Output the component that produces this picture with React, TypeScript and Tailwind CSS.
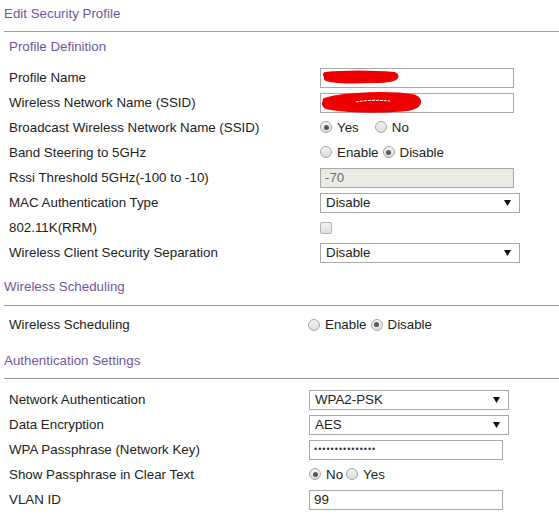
import React from "react";

const FONT = { fontFamily: '"Liberation Sans", Arial, sans-serif' };

const Radio: React.FC<{ checked?: boolean }> = ({ checked }) => (
  <span className="inline-flex w-[12px] h-[12px] rounded-full border border-[#a6a6a6] bg-gradient-to-b from-[#f4f4f4] to-[#dcdcdc] items-center justify-center shrink-0">
    {checked && <span className="w-[5px] h-[5px] rounded-full bg-[#5a5a5a]" />}
  </span>
);

const RadioGroup: React.FC<{ options: { label: string; checked?: boolean }[]; gap: string }> = ({ options, gap }) => (
  <div className={`flex items-center ${gap}`}>
    {options.map((o) => (
      <label key={o.label} className="flex items-center gap-[5px] text-[13.33px] text-[#222]">
        <Radio checked={o.checked} />
        <span>{o.label}</span>
      </label>
    ))}
  </div>
);

const TextBox: React.FC<{ value?: string; disabled?: boolean; children?: React.ReactNode }> = ({ value, disabled, children }) => (
  <div
    className={`relative w-[194px] h-[20px] border border-[#a9a9a9] flex items-center pl-[4px] text-[13.33px] ${
      disabled ? "bg-[#ebebe4] text-[#6d6d6d]" : "bg-white text-[#222]"
    }`}
  >
    {value}
    {children}
  </div>
);

const SelectBox: React.FC<{ value: string }> = ({ value }) => (
  <div className="w-[200px] h-[20px] border border-[#a9a9a9] bg-white flex items-center justify-between pl-[5px] pr-[8px] text-[13.33px] text-[#222]">
    <span>{value}</span>
    <svg width="7" height="6" viewBox="0 0 7 6">
      <path d="M0 0 H7 L3.5 6 Z" fill="#111" />
    </svg>
  </div>
);

const SectionTitle: React.FC<{ title: string; className: string }> = ({ title, className }) => (
  <div className={`flex items-center text-[13.33px] text-[#72579a] ${className}`}>{title}</div>
);

const Rule: React.FC = () => <div className="ml-[4px] border-t border-[#9c9c9c]" />;

const Row: React.FC<{ label: string; labelWidth: string; children?: React.ReactNode }> = ({ label, labelWidth, children }) => (
  <div className="flex items-center h-[25px]">
    <div className={`${labelWidth} pl-[9px] text-[13.33px] text-[#222] shrink-0`}>{label}</div>
    {children}
  </div>
);

export default function App() {
  return (
    <div className="w-[559px] h-[525px] bg-white overflow-hidden" style={FONT}>
      <SectionTitle title="Edit Security Profile" className="h-[27px] pl-[4px]" />
      <div className="h-[4px]" />
      <Rule />

      {/* Profile Definition */}
      <SectionTitle title="Profile Definition" className="h-[30px] pl-[9px]" />
      <div className="pt-[3px]">
        <Row label="Profile Name" labelWidth="w-[320px]">
          <TextBox>
            <svg className="absolute left-[1px] top-[0px]" width="80" height="16" viewBox="0 0 80 16">
              <path d="M4 6 C 20 4, 50 4, 72 6 C 77 8, 70 11, 50 11 C 30 12, 12 11, 5 9" stroke="#ee0000" strokeWidth="6" fill="#ee0000" strokeLinecap="round" />
            </svg>
          </TextBox>
        </Row>
        <Row label="Wireless Network Name (SSID)" labelWidth="w-[320px]">
          <TextBox>
            <svg className="absolute left-[1px] top-[-3px]" width="100" height="22" viewBox="0 0 100 22">
              <path d="M4 10 C 25 4, 70 3, 92 7 C 99 10, 96 16, 80 17 C 55 19, 25 18, 6 15 C 2 13, 3 11, 8 10" stroke="#ee0000" strokeWidth="7" fill="#ee0000" strokeLinecap="round" />
              <path d="M34 11 C 44 9, 56 9, 68 10" stroke="#ffffff" strokeWidth="1" strokeDasharray="3 1" fill="none" />
            </svg>
          </TextBox>
        </Row>
        <Row label="Broadcast Wireless Network Name (SSID)" labelWidth="w-[320px]">
          <RadioGroup gap="gap-[16px]" options={[{ label: "Yes", checked: true }, { label: "No" }]} />
        </Row>
        <Row label="Band Steering to 5GHz" labelWidth="w-[320px]">
          <RadioGroup gap="gap-[4px]" options={[{ label: "Enable" }, { label: "Disable", checked: true }]} />
        </Row>
        <Row label="Rssi Threshold 5GHz(-100 to -10)" labelWidth="w-[320px]">
          <TextBox value="-70" disabled />
        </Row>
        <Row label="MAC Authentication Type" labelWidth="w-[320px]">
          <SelectBox value="Disable" />
        </Row>
        <Row label="802.11K(RRM)" labelWidth="w-[320px]">
          <span className="w-[12px] h-[12px] rounded-[2px] border border-[#b5b5b5] bg-gradient-to-b from-[#f2f2f2] to-[#dedede]" />
        </Row>
        <Row label="Wireless Client Security Separation" labelWidth="w-[320px]">
          <SelectBox value="Disable" />
        </Row>
      </div>

      {/* Wireless Scheduling */}
      <SectionTitle title="Wireless Scheduling" className="h-[40px] pt-[4px] pl-[4px]" />
      <Rule />
      <div className="h-[38px] flex items-center">
        <div className="w-[308px] pl-[9px] text-[13.33px] text-[#222] shrink-0">Wireless Scheduling</div>
        <RadioGroup gap="gap-[4px]" options={[{ label: "Enable" }, { label: "Disable", checked: true }]} />
      </div>

      {/* Authentication Settings */}
      <SectionTitle title="Authentication Settings" className="h-[34px] pl-[4px]" />
      <Rule />
      <div className="pt-[8px]">
        <Row label="Network Authentication" labelWidth="w-[309px]">
          <SelectBox value="WPA2-PSK" />
        </Row>
        <Row label="Data Encryption" labelWidth="w-[309px]">
          <SelectBox value="AES" />
        </Row>
        <Row label="WPA Passphrase (Network Key)" labelWidth="w-[309px]">
          <TextBox>
            <span className="text-[9px] tracking-[1px] text-[#333]">•••••••••••••••</span>
          </TextBox>
        </Row>
        <Row label="Show Passphrase in Clear Text" labelWidth="w-[309px]">
          <RadioGroup gap="gap-[3px]" options={[{ label: "No", checked: true }, { label: "Yes" }]} />
        </Row>
        <Row label="VLAN ID" labelWidth="w-[309px]">
          <TextBox value="99" />
        </Row>
      </div>
    </div>
  );
}
